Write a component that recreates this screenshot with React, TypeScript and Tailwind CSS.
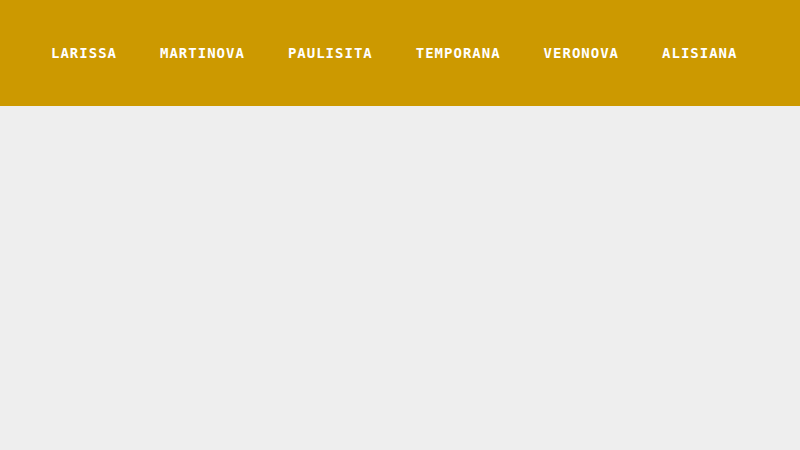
const names = ["Larissa", "Martinova", "Paulisita", "Temporana", "Veronova", "Alisiana"];

export default function App() {
  return (
    <div className="min-h-screen bg-[#eeeeee]">
      <header className="bg-[#cc9900] px-[51px] py-[43px]">
        <nav aria-label="Main">
          <ul className="flex flex-wrap gap-x-[43px] gap-y-4">
            {names.map((name) => (
              <li key={name}>
                <a
                  href="#"
                  className="block font-['DejaVu_Sans_Mono',monospace] text-[14px] leading-5 font-bold tracking-[1px] text-white uppercase"
                >
                  {name}
                </a>
              </li>
            ))}
          </ul>
        </nav>
      </header>
    </div>
  );
}
